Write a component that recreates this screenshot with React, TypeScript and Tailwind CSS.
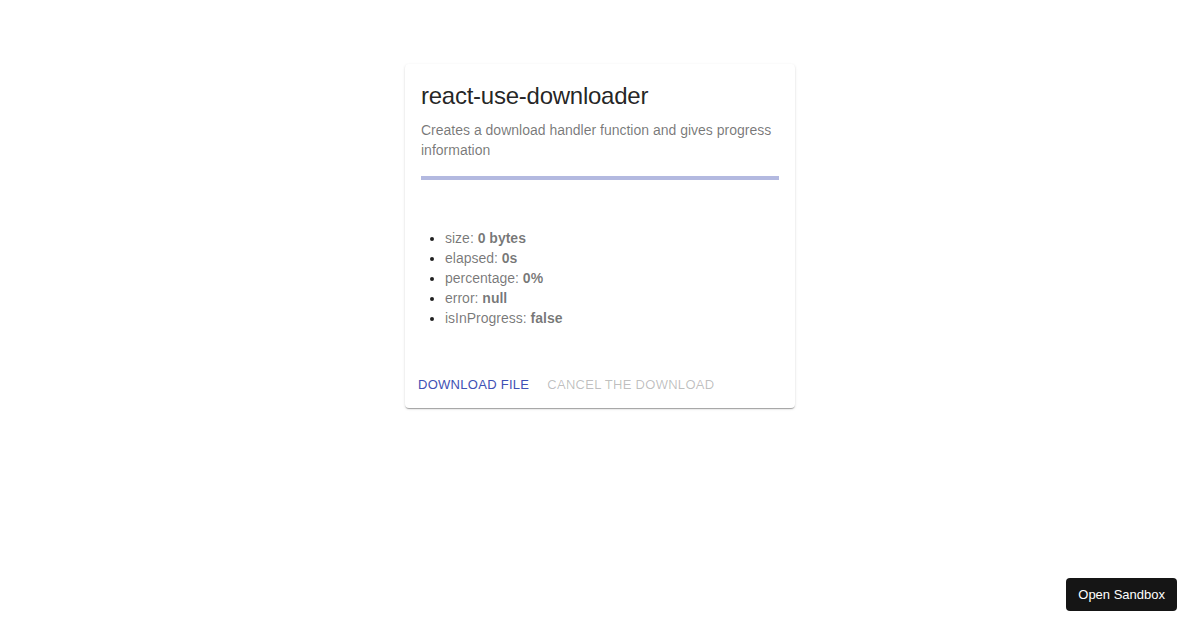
import React from 'react';

const stats: [string, string][] = [
  ['size', '0 bytes'],
  ['elapsed', '0s'],
  ['percentage', '0%'],
  ['error', 'null'],
  ['isInProgress', 'false'],
];

export default function App() {
  return (
    <div className="relative w-[1200px] h-[630px] bg-white font-['Liberation_Sans',Arial,sans-serif]">
      <div className="flex justify-center pt-16">
        <div className="w-[390px] rounded bg-white shadow-[0_2px_1px_-1px_rgba(0,0,0,0.2),0_1px_1px_0_rgba(0,0,0,0.14),0_1px_3px_0_rgba(0,0,0,0.12)]">
          <div className="px-4 pt-4 pb-[34px]">
            <h5 className="text-[24px] leading-[32px] tracking-[-0.25px] text-[rgba(0,0,0,0.87)] mb-2">react-use-downloader</h5>
            <p className="text-[14px] leading-[20px] text-[rgba(0,0,0,0.54)]">
              Creates a download handler function and gives progress information
            </p>
            <div className="mt-4 h-1 bg-[#b3b9e0]" />
            <ul className="mt-[48px] pl-6 list-disc text-[14px] leading-[20px] text-[rgba(0,0,0,0.87)]">
              {stats.map(([k, v]) => (
                <li key={k}>
                  <span className="text-[rgba(0,0,0,0.54)]">
                    {k}: <b className="font-bold">{v}</b>
                  </span>
                </li>
              ))}
            </ul>
          </div>
          <div className="flex items-center gap-2 p-2">
            <button className="h-[30px] px-[5px] rounded text-[13px] uppercase tracking-[0.28px] text-[#3f51b5]">
              Download file
            </button>
            <button disabled className="h-[30px] px-[5px] rounded text-[13px] uppercase tracking-[0.28px] text-[rgba(0,0,0,0.26)]">
              Cancel the download
            </button>
          </div>
        </div>
      </div>
      <button className="absolute right-[23px] bottom-[19px] h-[33px] px-[12px] rounded bg-[#151515] text-white text-[13px]">
        Open Sandbox
      </button>
    </div>
  );
}
